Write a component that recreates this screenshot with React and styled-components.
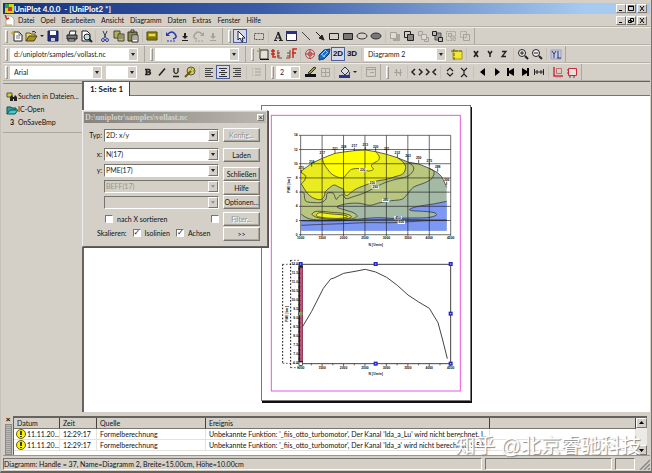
import styled, { createGlobalStyle, css } from "styled-components";

const K = "#222";
const G = "#a5a29a";

// toolbar glyphs, all on a 14 x 14 grid
const icons = {
  fresh: (
    <>
      <path d="M4 3h5l3 3v6H4z" fill="#fff" stroke={K} />
      <path d="M9 3v3h3M6 7h4M6 9h4" fill="none" stroke="#777" />
      <path d="M1 4h4M3 2v4" stroke="#c9a400" />
    </>
  ),
  open: (
    <>
      <path d="M2 12V4h4l1 1h4v2" fill="#f0d850" stroke="#554" />
      <path d="M2 12l3-5h8l-3 5z" fill="#a89410" stroke="#443" />
      <path d="M8 3q2-2 4 1" fill="none" stroke={K} />
    </>
  ),
  save: (
    <>
      <path d="M2 2h10v10H2z" fill="#26327c" stroke="#182058" />
      <path d="M4 2h6v4H4z" fill="#fff" />
      <path d="M5 9h4v3H5z" fill="#ccd" />
    </>
  ),
  print: (
    <>
      <path d="M4 6l1-4h6l-1 4" fill="#fff" stroke={K} />
      <path d="M2 6h10v4H2z" fill="#777" stroke={K} />
      <path d="M3 10h7v2H3z" fill="#ddd" stroke={K} />
    </>
  ),
  preview: (
    <>
      <path d="M3 2h5l3 3v7H3z" fill="#fff" stroke={K} />
      <circle cx="8" cy="8" r="3" fill="#bfe0e8" stroke={K} />
      <path d="M10 10l3 3" stroke={K} strokeWidth="2" />
    </>
  ),
  cut: (
    <>
      <path d="M5 2l3 7M9 2L6 9" stroke="#345" fill="none" />
      <circle cx="5" cy="11" r="1.5" fill="none" stroke="#2838b0" />
      <circle cx="9" cy="11" r="1.5" fill="none" stroke="#2838b0" />
    </>
  ),
  copy: (
    <>
      <path d="M2 2h6v7H2z" fill="#b4b060" stroke="#443" />
      <path d="M6 5h6v7H6z" fill="#c4c078" stroke="#443" />
      <path d="M7 7h4M7 9h4" stroke="#665" />
    </>
  ),
  paste: (
    <>
      <path d="M2 3h9v9H2z" fill="#8c8850" stroke="#332" />
      <path d="M5 1h3v2H5z" fill="#ddd" stroke="#332" />
      <path d="M6 6h6v7H6z" fill="#fff" stroke="#332" />
      <path d="M7 8h4M7 10h4" stroke="#555" />
    </>
  ),
  card: (
    <>
      <path d="M2 3h10v8H2z" fill="#a89a10" stroke="#443c00" />
      <path d="M4 5h6v2H4z" fill="#e8dc50" />
      <path d="M3 9h8" stroke="#554a00" />
    </>
  ),
  undo: (
    <>
      <path d="M4 5q4-4 7 0t-2 5" fill="none" stroke="#2838b0" strokeWidth="1.5" />
      <path d="M2 3v4h4z" fill="#2838b0" />
      <path d="M3 12h8" stroke="#2838b0" strokeDasharray="2 1" />
    </>
  ),
  redo: (
    <>
      <path d="M10 5Q6 1 3 5t2 5" fill="none" stroke={G} strokeWidth="1.5" />
      <path d="M12 3v4H8z" fill={G} />
      <path d="M3 12h8" stroke={G} strokeDasharray="2 1" />
    </>
  ),
  down: <path d="M6 4h2v3h2l-3 3-3-3h2zM4 11h6v1H4z" fill={K} />,
  downOff: <path d="M6 4h2v3h2l-3 3-3-3h2zM4 11h6v1H4z" fill={G} />,
  pointer: <path d="M5 2v9l2-2 2 4 1-1-1-3h3z" fill="#fff" stroke="#223" />,
  marquee: <path d="M2.500 4.500h9v6h-9z" fill="none" stroke="#555" strokeDasharray="2 1" />,
  letter: (
    <>
      <path d="M3 11.500h3M8 11.500h4M4 11l3-7M5 9h4" fill="none" stroke={K} />
      <path d="M7 3l3 8" stroke={K} strokeWidth="2" />
    </>
  ),
  window: (
    <>
      <path d="M1.500 2.500h10v9h-10z" fill="#fff" stroke="#223" />
      <path d="M1 2h11v3H1z" fill="#28348c" />
    </>
  ),
  line: <path d="M3 3l8 8" stroke="#444" />,
  arrow: <path d="M3 3l5 5M11 11L6 9l3-3z" stroke={K} fill={K} />,
  rect: <path d="M2.500 4.500h9v6h-9z" fill="none" stroke={K} />,
  rectFill: <path d="M2.500 4.500h9v6h-9z" fill="#777" stroke={K} />,
  oval: <ellipse cx="7" cy="7" rx="5" ry="3" fill="none" stroke="#333" />,
  ovalFill: <ellipse cx="7" cy="7" rx="5" ry="3" fill="#777" stroke="#333" />,
  front: (
    <>
      <path d="M5 5h7v7H5z" fill="#aaa69c" />
      <path d="M2.500 3.500h6v6h-6z" fill="#dedbd4" stroke={G} />
    </>
  ),
  back: (
    <>
      <path d="M2.500 2.500h6v6h-6z" fill="none" stroke={K} />
      <path d="M5.500 5.500h6v6h-6z" fill="#888" stroke={K} />
    </>
  ),
  forward: (
    <>
      <path d="M2.500 2.500h4v4h-4zM8.500 8.500h4v4h-4z" fill="none" stroke={G} />
      <path d="M5.500 5.500h5v5h-5z" fill="#dedbd4" stroke={G} />
    </>
  ),
  backward: (
    <>
      <path d="M5 4h6v7H5z" fill="#999" stroke="#555" />
      <path d="M2.500 2.500h4v4h-4zM8.500 8.500h4v4h-4z" fill="#bbb" stroke={K} />
    </>
  ),
  group: (
    <>
      <path d="M2.500 2.500h9v9h-9z" fill="none" stroke={G} strokeDasharray="2 1" />
      <path d="M4.500 4.500h3v3h-3zM7 7h3v3H7z" fill="none" stroke={G} />
    </>
  ),
  ungroup: (
    <>
      <path d="M2.500 2.500h6v6h-6z" fill="none" stroke={G} strokeDasharray="2 1" />
      <path d="M5.500 5.500h6v6h-6z" fill="none" stroke={G} />
    </>
  ),
  newLayer: (
    <>
      <path d="M4 3h8v9H4z" fill="#e4e1d4" stroke="#333" />
      <path d="M1 4h5M3.500 1v6" stroke="#8a9a10" />
      <path d="M4 12.500h9" stroke="#111" />
    </>
  ),
  axisLeft: (
    <>
      <path d="M3 2v8h3M1 4h4M1 7h4" fill="none" stroke="#cc2818" strokeWidth="1.500" />
      <path d="M8 3v8h4M7 6h3M7 9h3" fill="none" stroke="#7c4030" />
    </>
  ),
  axisRight: (
    <>
      <path d="M6 3v8H2M3 6h3M3 9h3" fill="none" stroke="#7c4030" />
      <path d="M9 11V2h4M8 6h4" fill="none" stroke="#cc2818" strokeWidth="1.500" />
    </>
  ),
  polar: (
    <g fill="none" stroke="#b84448">
      <circle cx="7" cy="7" r="4.500" />
      <circle cx="7" cy="7" r="2" />
      <path d="M2 7h10M7 2v10" />
    </g>
  ),
  surface: (
    <>
      <path d="M2 8l5-5 6-1-1 5-5 5-5 1z" fill="#1b6cc0" stroke="#103c78" />
      <path d="M4 8l4-4M6 10l5-5M8 3l3 3M4 7l4 3" stroke="#9ad0f4" />
    </>
  ),
  frame: (
    <>
      <path d="M3 4h9v8H3z" fill="#f0e83c" stroke="#a89c10" />
      <path d="M1 4h12M4 2v11" stroke="#665f00" fill="none" strokeDasharray="3 1" />
    </>
  ),
  x: <path d="M5 4l4 6M9 4l-4 6" stroke={K} strokeWidth="1.600" />,
  y: <path d="M5 4l2 3 2-3M7 7v3" fill="none" stroke={K} strokeWidth="1.500" />,
  z: <path d="M5 4.500h4l-4 5h4" fill="none" stroke={K} strokeWidth="1.300" />,
  zoomIn: (
    <g fill="none" stroke={K}>
      <circle cx="6" cy="6" r="3.500" fill="#eee" />
      <path d="M4 6h4M6 4v4" />
      <path d="M9 9l3 3" strokeWidth="2" />
    </g>
  ),
  zoomOut: (
    <g fill="none" stroke={K}>
      <circle cx="6" cy="6" r="3.500" fill="#eee" />
      <path d="M4 6h4" />
      <path d="M9 9l3 3" strokeWidth="2" />
    </g>
  ),
  ruler: (
    <>
      <path d="M2 3h10v9H2z" fill="#c8cce0" stroke="#9aa0c0" />
      <path d="M3 4l2 3 2-3M5 7v4M9 4v7M8 11h4" fill="none" stroke="#28347c" />
    </>
  ),
  bold: <path d="M5.500 4v6M4 4.500h4q2 1 0 2.500H5M8 7q3 1 0 2.500H4" fill="none" stroke={K} strokeWidth="1.600" />,
  italic: <path d="M10 3.500L4 10.500" stroke={K} strokeWidth="1.600" />,
  underline: <path d="M5 3v4q2 3 4 0V3M4 11.500h6" fill="none" stroke={K} strokeWidth="1.300" />,
  palette: (
    <>
      <ellipse cx="8" cy="6" rx="4" ry="4" fill="#d8cc58" stroke="#554" />
      <path d="M2 12l6-6" stroke="#665c10" strokeWidth="2" />
      <path d="M8 4h1M10 6h1" stroke="#b03020" />
    </>
  ),
  left: <path d="M3 3.500h8M3 5.500h6M3 7.500h8M3 9.500h6M3 11.500h8" stroke="#444" />,
  center: <path d="M3 3.500h8M5 5.500h4M3 7.500h8M5 9.500h4M3 11.500h8" stroke="#333" />,
  right: <path d="M3 3.500h8M5 5.500h6M3 7.500h8M5 9.500h6M3 11.500h8" stroke="#444" />,
  list: <path d="M3 4h1M6 4h6M3 7h1M6 7h6M3 10h1M6 10h6" stroke={G} />,
  pen: (
    <>
      <path d="M4 8l6-6 2 1-6 6z" fill="#a89c48" stroke="#332" />
      <path d="M1 9h11v3H1z" fill="#111" />
    </>
  ),
  grid: <path d="M3.500 3.500h8v8h-8zM7.500 3v9M3 7.500h9" fill="none" stroke={G} />,
  bucket: (
    <>
      <path d="M4 6l4-4 4 4-4 4z" fill="#ddd" stroke="#334" />
      <path d="M11 6q3 1 1 4" fill="none" stroke="#28348c" />
      <path d="M2 10h11v3H2z" fill="#28348c" />
    </>
  ),
  panel: <path d="M2.500 2.500h9v9h-9zM3 4.500h8M6 7.500h4" fill="none" stroke={G} />,
  cross: <path d="M3 7.500h8M5.500 4v7M4 5l6 5M9.500 4v7" fill="none" stroke={G} />,
  apart: <path d="M5 4L2 7l3 3M9 4l3 3-3 3" fill="none" stroke={K} strokeWidth="1.500" />,
  together: <path d="M2 4l3 3-3 3M12 4L9 7l3 3" fill="none" stroke={K} strokeWidth="1.500" />,
  diamond: <path d="M4 6l3-3 3 3M4 8l3 3 3-3" fill="none" stroke={K} strokeWidth="1.200" />,
  bigX: <path d="M4 3l3 3 3-3M4 12l3-3 3 3M7 6v3" fill="none" stroke={K} strokeWidth="1.200" />,
  prev: <path d="M9 3v8L4 7z" fill="#000" />,
  next: <path d="M5 3v8l5-4z" fill="#000" />,
  first: <path d="M3 3h2v3l5-3v8L5 8v3H3z" fill="#000" />,
  last: <path d="M11 3H9v3L4 3v8l5-3v3h2z" fill="#000" />,
  span: <path d="M2.500 4v6M11.500 4v6M3 7h8M5 5v4M9 5v4" stroke={K} fill="none" />,
  axes: (
    <>
      <path d="M3 2v9h9" stroke="#d02838" fill="none" strokeWidth="1.500" />
      <path d="M5.500 3.500h5v5h-5zM2 5h2M2 8h2M6 10v3M9 10v3" stroke="#c86870" fill="none" />
    </>
  ),
  box: (
    <>
      <path d="M3.500 3.500h8v7h-8z" fill="#e6dfda" stroke="#d02838" />
      <path d="M2 5h2M2 8h2M5 10v3M9 10v3" stroke="#903038" />
    </>
  ),
};

const row1 = [
  [["fresh", "Neu"], ["open", "Öffnen"], "menu", ["save", "Speichern"], "|", ["print", "Drucken"], ["preview", "Seitenansicht"], "|", ["cut", "Ausschneiden"], ["copy", "Kopieren"], ["paste", "Einfügen"], "|", ["card", "Daten"], "|", ["undo", "Rückgängig"], ["down", "Liste"], ["redo", "Wiederholen"], ["downOff", "Liste"]],
  [["pointer", "Auswahl", true], "|", ["marquee", "Bereich"], "|", ["letter", "Text"], ["window", "Fenster"], ["line", "Linie"], ["arrow", "Pfeil"], ["rect", "Rechteck"], ["rectFill", "Rechteck gefüllt"], ["oval", "Ellipse"], ["ovalFill", "Ellipse gefüllt"], "|", ["front", "Nach vorn"], ["back", "Nach hinten"], ["forward", "Vorwärts"], ["backward", "Rückwärts"], ["group", "Gruppieren"], ["ungroup", "Gruppe lösen"]],
];

const row2 = [
  [{ label: "Datei", value: "d:/uniplotr/samples/vollast.nc", width: 128 }],
  [{ label: "Kanal", value: "", width: 84 }],
  [["newLayer", "Neue Ebene"], ["axisLeft", "Achse links"], ["axisRight", "Achse rechts"], "|", ["polar", "Polar"], ["surface", "Fläche"], ["2D", "2D", true], ["3D", "3D"], "|", { label: "Diagramm", value: "Diagramm 2", width: 82 }, ["frame", "Rahmen"], "|", ["x", "X"], ["y", "Y"], ["z", "Z"], "|", ["zoomIn", "Vergrößern"], ["zoomOut", "Verkleinern"], "|", ["ruler", "Lineal"]],
];

const row3 = [
  [{ label: "Schrift", value: "Arial", width: 92 }, { label: "Schriftgröße", value: "", width: 31 }, ["bold", "Fett"], ["italic", "Kursiv"], ["underline", "Unterstrichen"], ["palette", "Farbe"], "|", ["left", "Linksbündig"], ["center", "Zentriert", true], ["right", "Rechtsbündig"], "|", ["list", "Liste"]],
  [{ label: "Linienstärke", value: "2", width: 24 }, ["pen", "Linienfarbe"], ["grid", "Gitter"], "|", ["bucket", "Füllfarbe"], "menu", "|", ["panel", "Legende"]],
  [["cross", "Marke"], "|", ["apart", "Dehnen x"], ["together", "Stauchen x"], "|", ["diamond", "Dehnen y"], ["bigX", "Stauchen y"], "|", ["prev", "Zurück"], ["next", "Vor"], ["first", "Anfang"], ["last", "Ende"], ["span", "Alles"], "|", ["axes", "Achsen"], ["box", "Kasten"]],
];

const events = [
  ["11.11.20...", "12:29:17", "Formelberechnung", "Unbekannte Funktion: '_fiis_otto_turbomotor',  Der Kanal 'Ida_a_Lu' wird nicht berechnet. I..."],
  ["11.11.20...", "12:29:17", "Formelberechnung", "Unbekannte Funktion: '_fiis_otto_turbomotor',  Der Kanal 'Ida_a' wird nicht berechnet. S.5 k..."],
];

const Icon = ({ name }) => (
  <svg width="14" height="14" viewBox="0 0 14 14" aria-hidden="true">
    {icons[name]}
  </svg>
);

const Combo = ({ label, value, width, framed, disabled }) => (
  <ComboBox $width={width} $framed={framed} $disabled={disabled}>
    <select aria-label={label} disabled={disabled} defaultValue={value}>
      <option value={value}>{value}</option>
    </select>
    <Drop $framed={framed} $disabled={disabled} />
  </ComboBox>
);

const Toolbar = ({ groups }) => (
  <ToolRow>
    {groups.map((items, i) => (
      <Bar key={i}>
        <Grip />
        {items.map((item, j) => {
          if (item === "|") return <Sep key={j} />;
          if (item === "menu") return <MenuBtn key={j} aria-label="Mehr" />;
          if (!Array.isArray(item)) return <Combo key={j} {...item} />;
          const [name, title, active] = item;
          return (
            <ToolBtn key={j} title={title} $active={active}>
              {icons[name] ? <Icon name={name} /> : name}
            </ToolBtn>
          );
        })}
      </Bar>
    ))}
  </ToolRow>
);

const WindowButtons = ({ restore }) => (
  <Captions>
    <CaptionBtn aria-label="Minimieren">
      <svg width="8" height="7" viewBox="0 0 8 7"><path d="M2 5.500h3" stroke="#000" /></svg>
    </CaptionBtn>
    <CaptionBtn aria-label="Maximieren">
      <svg width="8" height="7" viewBox="0 0 8 7">
        <path d={restore ? "M3.500 1.500h3v3h-3zM1.500 3.500h3v2h-3z" : "M1.500 1.500h5v4h-5zM1 1h6"} fill="none" stroke="#000" />
      </svg>
    </CaptionBtn>
    <CaptionBtn $apart aria-label="Schließen">
      <svg width="8" height="7" viewBox="0 0 8 7"><path d="M2 1l4 5M6 1L2 6" stroke="#000" /></svg>
    </CaptionBtn>
  </Captions>
);

const xTicks = [1000, 1500, 2000, 2500, 3000, 3500, 4000, 4500];
const tickX = (i) => 122 + i * 64.3;

// smooth curve through a list of points, written "x y x y ..."
const smooth = (list) => {
  const n = list.split(" ").map(Number);
  const p = [];
  for (let i = 0; i < n.length; i += 2) p.push([n[i], n[i + 1]]);
  let d = "";
  for (let i = 0; i < p.length - 1; i++) {
    const a = p[i - 1] || p[i];
    const b = p[i];
    const c = p[i + 1];
    const e = p[i + 2] || c;
    d += `C${b[0] + (c[0] - a[0]) / 6} ${b[1] + (c[1] - a[1]) / 6} ${c[0] - (e[0] - b[0]) / 6} ${c[1] - (e[1] - b[1]) / 6} ${c[0]} ${c[1]}`;
  }
  return `M${p[0].join(" ")}${d}`;
};

const hull =
  "M124 213L155 190 187 175 225 160 251 156 283 152 316 150 347 155 380 163 412 173 444 186 476 192 508 205 533 218 545 230 555 250 560 262V392H124Z";

// each line runs from its point on the hull; close leads back along the hull
const isolines = [
  {
    fill: "#b9c67e",
    line: "508 205 522 215 516 235 495 248 460 262 440 285 425 298 395 302 360 308 330 316 300 310 270 310 240 316 232 322 255 330 280 338 291 349 270 357 200 360 150 357 124 343",
    close: "V213L155 190 187 175 225 160 251 156 283 152 316 150 347 155 380 163 412 173 444 186 476 192Z",
  },
  {
    fill: "#e9ec1e",
    line: "412 173 430 187 437 203 428 222 405 230 380 238 350 243 330 250 290 266 275 276 262 286 254 283 250 268 238 262 222 255 208 264 196 275 192 290 180 299 158 293 142 280 134 268 124 252",
    close: "V213L155 190 187 175 225 160 251 156 283 152 316 150 347 155 380 163Z",
  },
  {
    fill: "#ffff00",
    line: "347 155 357 168 356 180 340 190 334 198 340 208 325 213 300 206 275 208 262 220 250 233 235 232 215 222 203 208 192 192 187 175",
    close: "L225 160 251 156 283 152 316 150Z",
  },
  {
    fill: "#7c98f4",
    line: "124 362 187 363 251 362 300 357 350 353 400 355 440 354 500 353 528 346 522 338 490 334 455 332 450 327 475 319 520 312 560 304",
    close: "V392H124Z",
  },
  {
    fill: "#cdd350",
    line: "155 343 165 335 185 334 215 337 250 340 272 347 270 354 240 358 200 357 170 352 155 343",
    close: "Z",
  },
  {
    fill: "#f4f418",
    line: "168 345 180 338 215 342 250 345 262 350 240 355 200 354 175 350 168 345",
    close: "Z",
  },
];

const curves = [
  "444 186 460 200 458 215 440 230 400 240 370 250 345 263 310 280 280 290 258 296 250 285 238 288 228 298 220 280 202 280 198 297 185 307 165 308 140 305 134 295 132 280 124 275",
  "124 218 137 228 134 240 124 252",
  "124 376 187 373 251 371 316 368 400 368 480 363 560 360",
  "124 362 251 361 400 358 560 361",
];

const points = [
  [124, 206, 270], [155, 187, 234], [187, 160, 217], [225, 147, 221], [251, 142, 228], [283, 140, 217], [316, 137, 213], [347, 141, 220], [380, 147, 221],
  [412, 159, 232], [444, 169, 243], [476, 176, 250], [508, 184, 275], [533, 202, 288], [560, 242, 306],
];

const inner = [[308, 212, 230], [337, 251, 250], [346, 264, 260], [377, 304, 280], [414, 356, 450], [424, 370, 600]];

const handles = [[122, 492], [347, 492], [572, 492], [572, 641], [572, 791], [347, 791]];

// one unit of the drawing is a third of a pixel
const Charts = () => (
  <svg viewBox="6 18 624 882" role="img" aria-label="Diagramme">
    <rect x="34" y="46" width="567" height="827" fill="none" stroke="#e45cd8" strokeWidth="3" />

    <path d={hull} fill="#a4b9a6" />
    {isolines.map(({ fill, line, close }) => <path key={line} d={smooth(line) + close} fill={fill} />)}
    <g fill="none" stroke="#222" strokeWidth="2">
      {isolines.map(({ line }) => <path key={line} d={smooth(line)} />)}
      {curves.map((line) => <path key={line} d={smooth(line)} />)}
      <path d={hull.replace("V392H124Z", "")} />
    </g>
    <g stroke="#222" strokeWidth="2">
      {xTicks.map((t, i) => <path key={t} d={`M${tickX(i)} 106V408`} />)}
      {[0, 1, 2, 3, 4, 5, 6, 7].map((i) => <path key={i} d={`M117 ${106 + i * 42.6}H572`} />)}
    </g>
    <Labels>
      {[14, 12, 10, 8, 6, 4, 2, 0].map((v, i) => <text key={v} x="113" y={109 + i * 42.6} textAnchor="end">{v}</text>)}
      {xTicks.map((t, i) => <text key={t} x={tickX(i)} y="418" textAnchor="middle">{t}</text>)}
      {points.map(([x, y, v]) => (
        <g key={x}>
          <path d={`M${x} ${y + 3}v10`} stroke="#111" strokeWidth="2" />
          <text x={x} y={y + 2} textAnchor="middle">{v}</text>
        </g>
      ))}
      {inner.map(([x, y, v]) => (
        <g key={x}>
          <rect x={x - 11} y={y - 8} width="22" height="10" fill="#fff" />
          <text x={x} y={y} textAnchor="middle">{v}</text>
        </g>
      ))}
      <text x="347" y="437" textAnchor="middle">N [1/min]</text>
      <text transform="translate(90 255) rotate(-90)" textAnchor="middle">PME [bar]</text>
    </Labels>

    <path d="M120 493H572V791H120Z" fill="none" stroke="#444" strokeWidth="3" />
    <path d="M122 497V787" stroke="#222" strokeWidth="14" />
    <path d="M124 503V783" stroke="#c8507c" strokeWidth="8" />
    <path d="M68 493V790M92 480V803" stroke="#111" strokeWidth="3" strokeDasharray="5 5" />
    <path d="M68 493H118M68 790H118M92 481H118M92 803H118" stroke="#111" strokeWidth="2" strokeDasharray="5 5" />
    <path d="M127 681L155 634 190 565 212 537 222 534 251 520 285 514 316 508 347 516 380 532 412 556 444 585 476 606 508 625 534 668 548 720 562 776" fill="none" stroke="#444" strokeWidth="3" />
    <g stroke="#222" strokeWidth="2">
      {[...Array(15).keys()].map((i) => <path key={i} d={`M${122 + i * 32.15} 791v${i % 2 ? 5 : 8}`} />)}
      {[...Array(23).keys()].map((i) => <path key={i} d={`M114 ${493 + i * 13.5}h8`} />)}
    </g>
    <Labels>
      {[...Array(12).keys()].map((i) => (
        <text key={i} x="114" y={496 + i * 27} textAnchor="end">{(12 - i * 0.5).toFixed(1)}</text>
      ))}
      {xTicks.map((t, i) => <text key={t} x={tickX(i)} y="806" textAnchor="middle">{t}</text>)}
      <text x="347" y="825" textAnchor="middle">N [1/min]</text>
      <text transform="translate(83 642) rotate(-90)" textAnchor="middle">PME [bar]</text>
    </Labels>
    {handles.map(([x, y]) => (
      <g key={`${x}-${y}`}>
        <rect x={x - 6} y={y - 6} width="12" height="12" fill="#2424c0" />
        <rect x={x - 2} y={y - 2} width="4" height="4" fill="#a8a8f0" />
      </g>
    ))}
    <rect x="117" y="636" width="10" height="10" fill="#68b050" />
    <rect x="117" y="786" width="10" height="10" fill="#fff" stroke="#222" strokeWidth="2" />
  </svg>
);

const ChannelDialog = () => (
  <Dialog role="dialog" aria-label="Kanalauswahl">
    <DialogTitle>
      <span>D:\uniplotr\samples\vollast.nc</span>
      <CloseBtn aria-label="Schließen">×</CloseBtn>
    </DialogTitle>
    <DialogBody>
      <Fields>
        <Field $gap={6}><span>Typ:</span><Combo framed label="Typ" value="2D: x/y" /></Field>
        <Field $gap={3}><span>x:</span><Combo framed label="x" value="N(17)" /></Field>
        <Field $gap={3}><span>y:</span><Combo framed label="y" value="PME(17)" /></Field>
        <Field $gap={3}><span /><Combo framed disabled label="z" value="BEFF(17)" /></Field>
        <Field $gap={3}><span /><Combo framed disabled label="Parameter" value="" /></Field>
        <Checks $indent>
          <Check><input type="checkbox" />nach X sortieren</Check>
          <input type="checkbox" aria-label="Filter verwenden" />
        </Checks>
        <Checks>
          <span>Skalieren:</span>
          <Check><input type="checkbox" defaultChecked />Isolinien</Check>
          <Check><input type="checkbox" defaultChecked />Achsen</Check>
        </Checks>
      </Fields>
      <Actions>
        <DialogBtn $gap={6} disabled>Konfig...</DialogBtn>
        <DialogBtn $gap={5}>Laden</DialogBtn>
        <DialogBtn>Schließen</DialogBtn>
        <DialogBtn>Hilfe</DialogBtn>
        <DialogBtn $gap={3}>Optionen...</DialogBtn>
        <DialogBtn $gap={1} disabled>Filter...</DialogBtn>
        <DialogBtn>&gt;&gt;</DialogBtn>
      </Actions>
    </DialogBody>
  </Dialog>
);

export default function App() {
  return (
    <Shell>
      <Global />
      <TitleBar>
        <svg width="9" height="9" viewBox="0 0 9 9">
          <path d="M0 0h9v9H0z" fill="#d8d020" />
          <path d="M0 0h4v4H0z" fill="#30a040" />
          <path d="M3 3h4v4H3z" fill="#d03020" />
        </svg>
        <h1>UniPlot 4.0.0&nbsp; - [UniPlot2 *]</h1>
        <WindowButtons />
      </TitleBar>
      <MenuBar>
        <svg width="11" height="11" viewBox="0 0 11 11">
          <path d="M2 1h5l3 3v7H2z" fill="#fff" stroke="#aaa" />
          <path d="M1 0l2 4 2-1" fill="none" stroke="#c83020" strokeWidth="1.500" />
          <path d="M2 10h6" stroke="#c8a020" />
        </svg>
        {["Datei", "Opel", "Bearbeiten", "Ansicht", "Diagramm", "Daten", "Extras", "Fenster", "Hilfe"].map((m) => (
          <MenuItem key={m}>{m}</MenuItem>
        ))}
        <WindowButtons restore />
      </MenuBar>
      <Toolbar groups={row1} />
      <Toolbar groups={row2} />
      <Toolbar groups={row3} />

      <Main>
        <Side>
          <SideBtn>
            <svg width="12" height="10" viewBox="0 0 12 10">
              <path d="M1 1h5v4H1z" fill="#d8d020" stroke="#554" />
              <path d="M4 9V5l2-2 1 2h1l1-2 2 2v4H8V7H7v2z" fill="#222" />
            </svg>
            Suchen in Dateien...
          </SideBtn>
          <SideBtn>
            <svg width="12" height="10" viewBox="0 0 12 10">
              <path d="M1 9V2h4l1 1h4v2" fill="#30a0a0" stroke="#155" />
              <path d="M1 9l3-4h8L9 9z" fill="#48c8c8" stroke="#155" />
            </svg>
            IC-Open
          </SideBtn>
          <SideBtn><b>3</b>OnSaveBmp</SideBtn>
        </Side>
        <Doc>
          <Tabs><Tab>1: Seite 1</Tab></Tabs>
          <Canvas>
            <Page><Charts /></Page>
          </Canvas>
          <ChannelDialog />
        </Doc>
      </Main>

      <Log>
        <LogStrip><button aria-label="Schließen">×</button><i /></LogStrip>
        <LogView>
          <LogTable>
            <colgroup>
              <col width="46" /><col width="37" /><col width="109" /><col width="284" /><col />
            </colgroup>
            <thead>
              <tr><th>Datum</th><th>Zeit</th><th>Quelle</th><th>Ereignis</th><th aria-label="Leer" /></tr>
            </thead>
            <tbody>
              {events.map(([date, time, source, text]) => (
                <tr key={text}>
                  <td><Stamp>
                    <svg width="10" height="10" viewBox="0 0 10 10">
                      <circle cx="5" cy="5" r="4.500" fill="#f8f010" stroke="#665f00" />
                      <path d="M5 2v4M5 7v1" stroke="#000" strokeWidth="1.500" />
                    </svg>
                    {date}
                  </Stamp></td>
                  <td>{time}</td>
                  <td>{source}</td>
                  <td>{text}</td>
                  <td />
                </tr>
              ))}
            </tbody>
          </LogTable>
        </LogView>
        <Scroll>
          <button aria-label="Nach oben"><svg width="9" height="8" viewBox="0 0 9 8"><path d="M2 5l2.500-3L7 5z" /></svg></button>
          <button aria-label="Nach unten"><svg width="9" height="8" viewBox="0 0 9 8"><path d="M2 3l2.500 3L7 3z" /></svg></button>
        </Scroll>
        <Watermark>知乎 @北京睿驰科技</Watermark>
      </Log>

      <Status>
        <Pane>Diagramm: Handle = 37, Name=Diagramm 2, Breite=15.00cm, Höhe=10.00cm</Pane>
        <Pane $width={127} />
        <Pane $width={20} />
        <svg width="12" height="12" viewBox="0 0 12 12">
          <path d="M2 12L12 2M6 12l6-6M10 12l2-2" stroke="#888" strokeWidth="1.500" />
        </svg>
      </Status>
    </Shell>
  );
}

const Global = createGlobalStyle`
  *,
  *::before {
    box-sizing: border-box;
  }

  body {
    margin: 0;
    background: #d4d0c8;
    color: #111;
    font: 7px/9px Lato, "Liberation Sans", sans-serif;
  }

  button,
  select,
  input {
    margin: 0;
    padding: 0;
    border: 0;
    background: none;
    color: inherit;
    font: inherit;
  }

  svg {
    display: block;
    flex: none;
  }
`;

const raised = css`
  border: 1px solid;
  border-color: #fff #77746e #77746e #fff;
`;

const sunken = css`
  border: 1px solid;
  border-color: #77746e #fff #fff #77746e;
`;

const Shell = styled.div`
  display: flex;
  flex-direction: column;
  min-height: 100vh;
  border: 1px solid #aaa79f;
  border-width: 0 1px 2px 1px;
  border-color: #e4e2dc #77746e #66635e #c4c1ba;
  padding: 3px 1px 0 2px;
`;

const TitleBar = styled.header`
  display: flex;
  align-items: center;
  height: 11px;
  padding-left: 2px;
  background: linear-gradient(90deg, #16337e, #3a5ca8 40%, #a6caf0 90%);
  color: #fff;

  h1 {
    flex: 1;
    margin: 0;
    font: bold 8px/10px Lato, "Liberation Sans", sans-serif;
  }
`;

const Captions = styled.div`
  display: flex;
  margin-left: auto;
  padding-right: 3px;
`;

const CaptionBtn = styled.button`
  ${raised}
  display: flex;
  align-items: center;
  justify-content: center;
  width: 10px;
  height: 9px;
  margin-left: ${(p) => (p.$apart ? "1px" : "0")};
  background: #d4d0c8;
`;

const MenuBar = styled.nav`
  display: flex;
  align-items: center;
  height: 13px;
  padding-left: 1px;
  border-bottom: 1px solid #b4b1aa;
`;

const MenuItem = styled.button`
  padding: 0 3px;
`;

const ToolRow = styled.div`
  display: flex;
  gap: 3px;
  height: 18px;
  border-top: 1px solid #eeece8;
  border-bottom: 1px solid #b4b1aa;
`;

const Bar = styled.div`
  display: flex;
  align-items: center;
  padding-right: 2px;
  border-right: 1px solid #aaa79f;
`;

const Grip = styled.span`
  width: 3px;
  height: 13px;
  margin: 0 2px;
  border: 1px solid;
  border-color: #fff #99968f #99968f #fff;
`;

const Sep = styled.span`
  width: 1px;
  height: 13px;
  margin: 0 2px;
  background: #c4c1b9;
`;

const ToolBtn = styled.button`
  display: flex;
  align-items: center;
  justify-content: center;
  width: 14px;
  height: 14px;
  font: bold 8px/14px "Liberation Sans", sans-serif;
  ${(p) =>
    p.$active &&
    css`
      background: #d4d8e8;
      outline: 1px solid #4a5f9c;
      outline-offset: -1px;
    `}
`;

const MenuBtn = styled.button`
  width: 8px;
  height: 14px;

  &::before {
    content: "";
    display: block;
    width: 4px;
    margin: auto;
    border: 2px solid transparent;
    border-top-color: #222;
    border-bottom: 0;
  }
`;

const ComboBox = styled.span`
  display: grid;
  grid-template-columns: 1fr 10px;
  width: ${(p) => (p.$width ? `${p.$width}px` : "auto")};
  height: 13px;
  margin-right: ${(p) => (p.$framed ? "0" : "4px")};
  background: ${(p) => (p.$disabled ? "#d4d0c8" : "#fff")};
  ${(p) => p.$framed && sunken}

  select {
    grid-area: 1 / 1 / 2 / 3;
    min-width: 0;
    padding-left: ${(p) => (p.$framed ? "1px" : "4px")};
    appearance: none;
    opacity: 1;
    color: ${(p) => (p.$disabled ? "#96938c" : "#222")};
  }
`;

const Drop = styled.span`
  display: flex;
  grid-area: 1 / 2;
  align-items: center;
  justify-content: center;
  margin: ${(p) => (p.$framed ? "0" : "1px")};
  background: #d4d0c8;
  pointer-events: none;
  ${(p) => p.$framed && raised}

  &::before {
    content: "";
    border: 2px solid transparent;
    border-top: 3px solid ${(p) => (p.$disabled ? "#96938c" : "#222")};
    border-bottom: 0;
  }
`;

const Main = styled.main`
  display: flex;
  flex: 1;
  min-height: 330px;
`;

const Side = styled.aside`
  align-self: flex-start;
  width: 79px;
  height: 50px;
  margin-top: 2px;
  padding: 6px 0 0 3px;
  border-top: 1px solid #8c8982;
  border-bottom: 1px solid #aaa79f;
`;

const SideBtn = styled.button`
  display: flex;
  align-items: center;
  height: 13px;
  white-space: nowrap;

  b {
    width: 12px;
    text-align: center;
  }
`;

const Doc = styled.section`
  position: relative;
  display: flex;
  flex: 1;
  flex-direction: column;
  border: 2px solid #66635e;
  border-width: 1px 0 0 2px;
`;

const Tabs = styled.div`
  display: flex;
  height: 14px;
  background: #d4d0c8;
  box-shadow: inset 0 -1px #77746e;
`;

const Tab = styled.button`
  width: 46px;
  border-right: 1px solid #444;
  background: #fff;
  font: bold 8px/12px Lato, "Liberation Sans", sans-serif;
`;

const Canvas = styled.div`
  flex: 1;
  padding: 9px 0 9px 177px;
  background: #fff;
`;

const Page = styled.div`
  width: 210px;
  border: 1px solid #777;
  background: #fff;
  box-shadow: 1px 2px #111;
`;

const Labels = styled.g`
  fill: #111;
  font: bold 10px "Liberation Sans", sans-serif;
`;

const Dialog = styled.div`
  position: absolute;
  top: 28px;
  left: -2px;
  width: 186px;
  border: 1px solid;
  border-color: #eee #66635e #66635e #eee;
  background: #d4d0c8;
  box-shadow: 1px 1px #55524d;
`;

const DialogTitle = styled.div`
  display: flex;
  align-items: center;
  justify-content: space-between;
  height: 11px;
  margin: 1px;
  padding: 0 2px 0 1px;
  background: linear-gradient(90deg, #85827d, #bab7b0);
  color: #d4d0c8;
  font: bold 8px/10px "Liberation Serif", serif;
`;

const CloseBtn = styled.button`
  ${raised}
  width: 7px;
  height: 7px;
  background: #d4d0c8;
  color: #222;
  font: 7px/5px "Liberation Sans", sans-serif;
`;

const DialogBody = styled.div`
  display: flex;
  gap: 4px;
  padding: 4px 7px 5px 2px;
`;

const Fields = styled.div`
  flex: 1;
  padding-top: 1px;
`;

const Field = styled.label`
  display: grid;
  grid-template-columns: 17px 1fr;
  gap: 2px;
  align-items: center;
  margin-bottom: ${(p) => p.$gap}px;
  text-align: right;
`;

const Checks = styled.div`
  display: flex;
  align-items: center;
  justify-content: ${(p) => (p.$indent ? "space-between" : "flex-start")};
  gap: 6px;
  height: 14px;
  padding-left: ${(p) => (p.$indent ? "20px" : "12px")};

  input {
    ${sunken}
    appearance: none;
    width: 8px;
    height: 8px;
    background: #fff;
  }

  input:checked::before {
    content: "✓";
    display: block;
    font: bold 8px/6px "DejaVu Sans", sans-serif;
  }
`;

const Check = styled.label`
  display: flex;
  align-items: center;
  gap: 4px;
`;

const Actions = styled.div`
  display: flex;
  flex-direction: column;
  width: 37px;
`;

const DialogBtn = styled.button`
  ${raised}
  height: 14px;
  margin-bottom: ${(p) => p.$gap || 0}px;
  box-shadow: inset -1px -1px #aaa79f;

  &:disabled {
    color: #96938c;
    text-shadow: 1px 1px #fff;
  }
`;

const Log = styled.section`
  position: relative;
  display: flex;
  height: 39px;
  margin: 4px 3px 0 0;
`;

const LogStrip = styled.div`
  display: flex;
  flex-direction: column;
  align-items: center;
  width: 10px;

  button {
    height: 8px;
    font: bold 8px/8px "Liberation Sans", sans-serif;
  }

  i {
    flex: 1;
    width: 7px;
    border: 1px solid #8c8982;
    background: repeating-linear-gradient(#bdbab2 0 1px, #999 1px 2px);
  }
`;

const LogView = styled.div`
  flex: 1;
  min-width: 0;
  border-top: 2px solid #66635e;
  border-left: 1px solid #66635e;
  background: #fff;
`;

const LogTable = styled.table`
  width: 100%;
  table-layout: fixed;
  border-spacing: 0;

  th,
  td {
    overflow: hidden;
    height: 11px;
    padding: 0 0 0 3px;
    text-align: left;
    font-weight: normal;
    white-space: nowrap;
  }

  th {
    border-right: 1px solid #44423e;
    border-bottom: 1px solid #77746e;
    background: #d4d0c8;
  }

  td {
    border-right: 1px solid #e4e2dc;
    border-bottom: 1px solid #e4e2dc;
  }

  td:first-child {
    padding-left: 2px;
  }
`;

const Stamp = styled.span`
  display: flex;
  align-items: center;
  gap: 1px;
`;

const Scroll = styled.div`
  display: flex;
  flex-direction: column;
  justify-content: space-between;
  width: 11px;
  border-top: 2px solid #66635e;
  background: #eceae5;

  button {
    ${raised}
    height: 10px;
    background: #d4d0c8;
  }
`;

const Watermark = styled.span`
  position: absolute;
  right: 6px;
  bottom: -3px;
  color: #fff;
  font: 20px/24px "Liberation Sans", "Noto Sans CJK SC", sans-serif;
  text-shadow: 1px 1px 1px #888;
  white-space: nowrap;
  pointer-events: none;
`;

const Status = styled.footer`
  display: flex;
  gap: 3px;
  align-items: center;
  height: 16px;
  border-top: 1px solid #99968f;
`;

const Pane = styled.div`
  ${sunken}
  flex: ${(p) => (p.$width ? "none" : "1")};
  width: ${(p) => (p.$width ? `${p.$width}px` : "auto")};
  height: 12px;
  line-height: 10px;
  white-space: nowrap;
`;
